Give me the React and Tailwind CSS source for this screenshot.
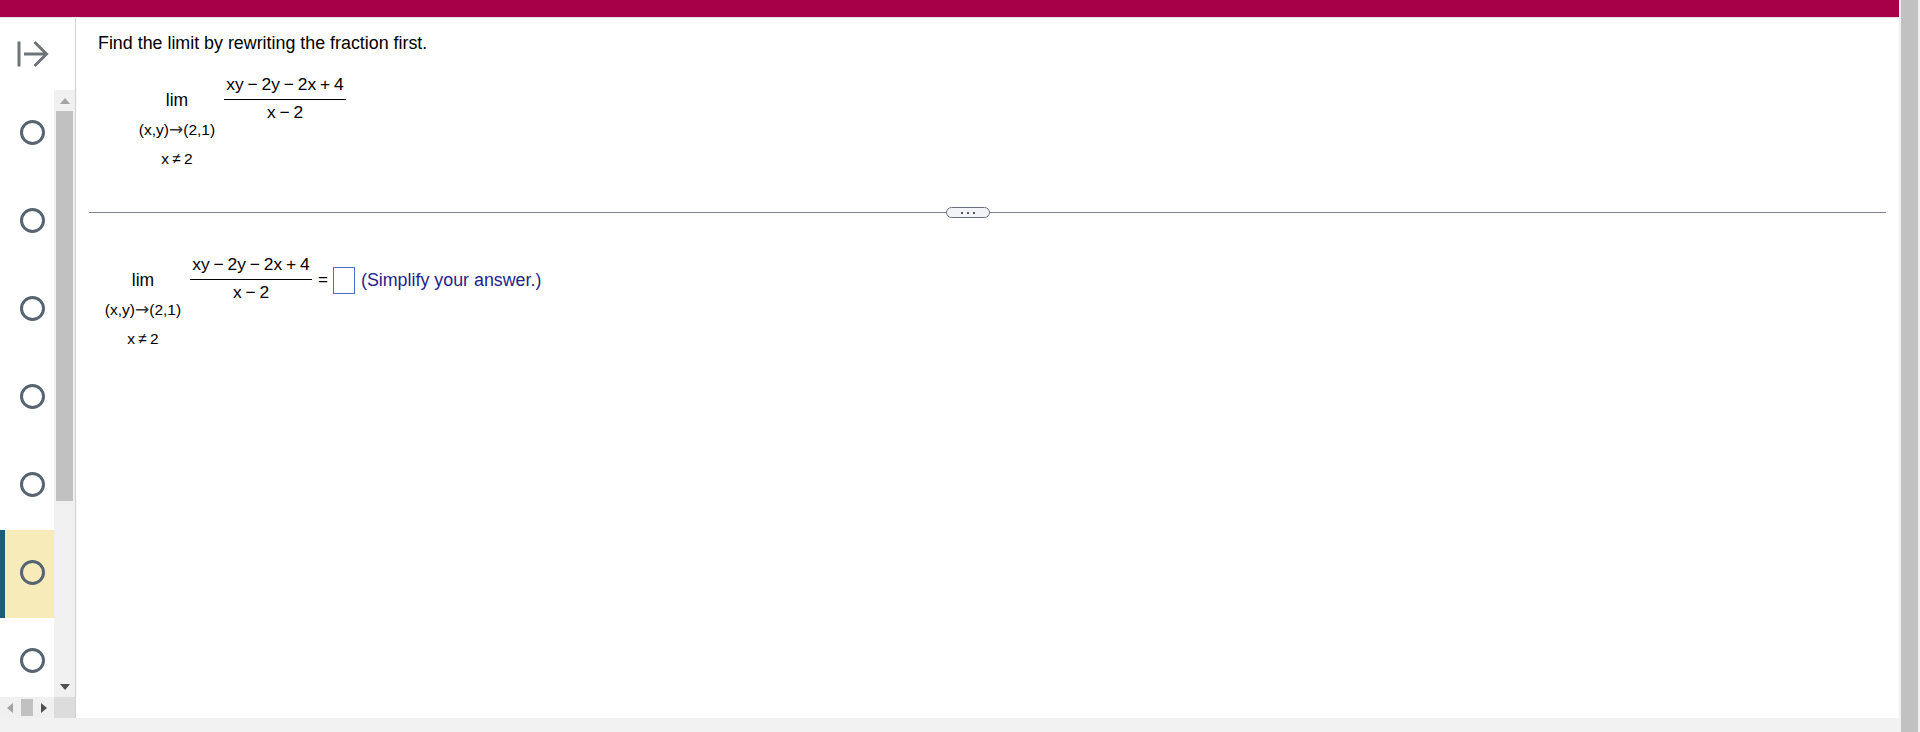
import React from "react";

const rows = [0, 1, 2, 3, 4, 5, 6];

const Arrow = ({ points, color, className }) => (
    <svg width="8" height="10" viewBox="0 0 8 10" className={className}>
        <polygon points={points} fill={color} />
    </svg>
);

const Limit = () => (
    <div className="flex flex-col items-center w-[78px] pt-[15px] font-['Liberation_Sans',sans-serif] text-black">
        <div className="h-[30px] leading-[30px] text-[17.5px]">lim</div>
        <div className="h-[29px] leading-[29px] text-[15.5px] whitespace-nowrap">
            (x,y)<span className="font-['DejaVu_Sans',sans-serif] text-[17px] leading-none text-[#333]">→</span>(2,1)
        </div>
        <div className="h-[30px] leading-[30px] text-[15.5px] whitespace-nowrap [word-spacing:-1px]">x ≠ 2</div>
    </div>
);

const Fraction = () => (
    <div className="flex flex-col items-center w-[122px] text-[17.4px] text-black [word-spacing:-1px]">
        <div className="h-[29px] leading-[29px] whitespace-nowrap">xy − 2y − 2x + 4</div>
        <div className="w-full h-px bg-black"></div>
        <div className="h-[25px] leading-[25px] whitespace-nowrap">x − 2</div>
    </div>
);

export default function App() {
    return (
        <div className="flex w-[1920px] h-[732px] overflow-hidden bg-[#f2f2f2] font-['Liberation_Sans',sans-serif]">
            <div className="flex flex-col w-[1899px] h-full">
                <div className="h-[18px] shrink-0 bg-[#a80048] border-b border-[#e4e4e4]"></div>

                <div className="flex h-[700px] bg-white">
                    {/* Question list */}
                    <div className="flex flex-col w-[76px] shrink-0 border-r border-[#cfcfdc]">
                        <div className="flex items-center h-[72px] shrink-0 pl-[17px]">
                            <svg width="32" height="28" viewBox="0 0 32 28" fill="none" stroke="#6d7478" strokeWidth="3">
                                <path d="M2 1.5V26.5" />
                                <path d="M7 14H29" />
                                <path d="M17.5 2L29.5 14L17.5 26" />
                            </svg>
                        </div>
                        <div className="flex h-[607px] shrink-0">
                            <div className="w-[54px] overflow-hidden">
                                {rows.map((row) => (
                                    <div
                                        key={row}
                                        className={row === 5
                                            ? "h-[88px] pt-[30px] pl-[15px] border-l-[5px] border-[#1a5e7a] bg-[#f8ebba]"
                                            : "h-[88px] pt-[30px] pl-[20px]"}
                                    >
                                        <div className="w-[25px] h-[25px] rounded-full border-[3px] border-[#566472]"></div>
                                    </div>
                                ))}
                            </div>
                            <div className="flex flex-col items-center w-[21px] bg-[#f0f0f0]">
                                <div className="flex items-center justify-center h-[21px] shrink-0">
                                    <svg width="10" height="6" viewBox="0 0 10 6" className="mt-[1px]"><polygon points="0,6 10,6 5,0" fill="#a3a3a3" /></svg>
                                </div>
                                <div className="w-[17px] h-[390px] shrink-0 bg-[#c1c1c1]"></div>
                                <div className="flex-1"></div>
                                <div className="flex items-center justify-center h-[21px] shrink-0">
                                    <svg width="10" height="6" viewBox="0 0 10 6"><polygon points="0,0 10,0 5,6" fill="#505050" /></svg>
                                </div>
                            </div>
                        </div>
                        <div className="flex h-[21px] shrink-0">
                            <div className="flex items-center w-[54px] bg-[#f0f0f0]">
                                <Arrow points="6,0 6,10 0,5" color="#a3a3a3" className="ml-[7px]" />
                                <div className="w-[12px] h-[17px] ml-[6px] bg-[#c1c1c1]"></div>
                                <Arrow points="0,0 0,10 6,5" color="#505050" className="ml-[8px]" />
                            </div>
                            <div className="w-[21px] bg-[#dcdcdc]"></div>
                        </div>
                    </div>

                    {/* Question */}
                    <div className="flex-1 min-w-0 pl-[13px] pr-[13px]">
                        <p className="pt-[15px] pl-[9px] h-[37px] leading-5 text-[17.85px] text-black">Find the limit by rewriting the fraction first.</p>
                        <div className="flex pl-[49px] pt-[15px] gap-[8px] h-[149px]">
                            <Limit />
                            <Fraction />
                        </div>
                        <div className="flex items-center h-[11px] mt-[3px]">
                            <div className="w-[857px] h-px bg-[#80848c]"></div>
                            <div className="flex items-center justify-center gap-[4px] w-[44px] h-[11px] rounded-full border border-[#68707c] bg-[#f2f4f7]">
                                <span className="w-[2px] h-[2px] bg-[#555c66]"></span>
                                <span className="w-[2px] h-[2px] bg-[#555c66]"></span>
                                <span className="w-[2px] h-[2px] bg-[#555c66]"></span>
                            </div>
                            <div className="flex-1 h-px bg-[#80848c]"></div>
                        </div>
                        <div className="flex pl-[15px] pt-[32px] gap-[8px]">
                            <Limit />
                            <Fraction />
                            <div className="flex items-center h-[58px] pt-[2px] text-[17px]">
                                <span className="ml-[-2px] text-black">=</span>
                                <span className="w-[22px] h-[27px] ml-[5px] border border-[#4a6fc4] bg-white"></span>
                                <span className="ml-[6px] text-[17.85px] text-[#1e1e8c] whitespace-nowrap">(Simplify your answer.)</span>
                            </div>
                        </div>
                    </div>
                </div>
            </div>

            {/* Page scrollbar */}
            <div className="w-[21px] h-full pl-[2px] pr-[2px] bg-[#f0f0f0]">
                <div className="w-[17px] h-full bg-[#c1c1c1]"></div>
            </div>
        </div>
    );
}
